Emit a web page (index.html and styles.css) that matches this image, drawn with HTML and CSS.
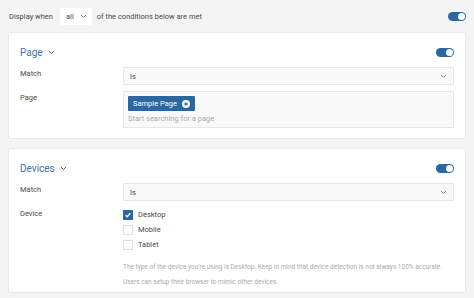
FILE: index.html
```html
<!DOCTYPE html>
<html lang="en">
<head>
    <meta charset="UTF-8">
    <meta name="viewport" content="width=device-width, initial-scale=1.0">
    <title>Display Conditions</title>
    <link rel="stylesheet" href="styles.css">
</head>
<body>

<div class="top-bar">
    <span>Display when</span>
    <div class="mini-select">
        all
        <svg class="chev" width="7" height="5" viewBox="0 0 7 5"><polyline points="1,1 3.5,3.5 6,1" fill="none" stroke="#777" stroke-width="1"/></svg>
    </div>
    <span>of the conditions below are met</span>
    <span class="toggle on top-toggle"></span>
</div>

<div class="card">
    <div class="card-head">
        <span class="card-title">Page
            <svg class="chev" width="7" height="5" viewBox="0 0 7 5"><polyline points="1,1 3.5,3.5 6,1" fill="none" stroke="#3f72a8" stroke-width="1"/></svg>
        </span>
        <span class="toggle on"></span>
    </div>
    <div class="row">
        <label>Match</label>
        <div class="select">
            <span>Is</span>
            <svg class="chev" width="7" height="5" viewBox="0 0 7 5"><polyline points="1,1 3.5,3.5 6,1" fill="none" stroke="#888" stroke-width="1"/></svg>
        </div>
    </div>
    <div class="row">
        <label>Page</label>
        <div class="tag-box">
            <span class="chip">Sample Page
                <svg width="8" height="8" viewBox="0 0 8 8"><circle cx="4" cy="4" r="4" fill="#fff"/><path d="M2.6 2.6 L5.4 5.4 M5.4 2.6 L2.6 5.4" stroke="#2b68a1" stroke-width="1.2"/></svg>
            </span>
            <div class="placeholder">Start searching for a page</div>
        </div>
    </div>
</div>

<div class="card card-last">
    <div class="card-head">
        <span class="card-title">Devices
            <svg class="chev" width="7" height="5" viewBox="0 0 7 5"><polyline points="1,1 3.5,3.5 6,1" fill="none" stroke="#3f72a8" stroke-width="1"/></svg>
        </span>
        <span class="toggle on"></span>
    </div>
    <div class="row">
        <label>Match</label>
        <div class="select">
            <span>Is</span>
            <svg class="chev" width="7" height="5" viewBox="0 0 7 5"><polyline points="1,1 3.5,3.5 6,1" fill="none" stroke="#888" stroke-width="1"/></svg>
        </div>
    </div>
    <div class="row">
        <label>Device</label>
        <div class="checks">
            <div class="check-item">
                <span class="box checked">
                    <svg width="10" height="10" viewBox="0 0 10 10"><path d="M2.6 5.2 L4.2 6.8 L7.4 3.2" fill="none" stroke="#fff" stroke-width="1.3"/></svg>
                </span>
                Desktop
            </div>
            <div class="check-item"><span class="box"></span>Mobile</div>
            <div class="check-item"><span class="box"></span>Tablet</div>
            <p class="help">The type of the device you're using is Desktop. Keep in mind that device detection is not always 100% accurate. Users can setup their browser to mimic other devices</p>
        </div>
    </div>
</div>

</body>
</html>
```

FILE: styles.css
```css
body {
    margin: 0;
    background: #f4f4f4;
    font-family: Roboto, "Liberation Sans", sans-serif;
    font-size: 7.5px;
    color: #4a4a4a;
}

.top-bar {
    display: flex;
    align-items: center;
    height: 32px;
    padding: 0 8px 0 9px;
    gap: 5px;
}

.mini-select {
    display: flex;
    align-items: center;
    gap: 6px;
    background: #fff;
    height: 17px;
    padding: 0 5px 0 6px;
    margin: 1px 0 0 2px;
}

.top-toggle {
    margin-left: auto;
}

.toggle {
    display: inline-block;
    position: relative;
    width: 18px;
    height: 9px;
    border-radius: 5px;
    background: #ccc;
}

.toggle.on {
    background: #2b68a1;
}

.toggle.on::after {
    content: "";
    position: absolute;
    right: 1px;
    top: 1px;
    width: 7px;
    height: 7px;
    border-radius: 50%;
    background: #fff;
}

.card {
    background: #fff;
    border: 1px solid #e9e9e9;
    border-radius: 2px;
    margin: 0 8px 9px 8px;
    padding: 10px 11px 10px 11px;
}

.card-last {
    padding-bottom: 2px;
}

.card-head {
    display: flex;
    justify-content: space-between;
    align-items: center;
    height: 18px;
    margin-bottom: 6px;
}

.card-title {
    display: flex;
    align-items: center;
    gap: 5px;
    font-size: 10px;
    color: #3f72a8;
}

.row {
    display: flex;
    margin-bottom: 6px;
}

.row:last-child {
    margin-bottom: 0;
}

.row label {
    width: 103px;
    flex-shrink: 0;
    padding-top: 2px;
}

.select {
    flex: 1;
    display: flex;
    justify-content: space-between;
    align-items: center;
    height: 16px;
    padding: 0 6px;
    background: #f9f9f9;
    border: 1px solid #e6e6e6;
}

.tag-box {
    flex: 1;
    padding: 4px;
    background: #f9f9f9;
    border: 1px solid #e6e6e6;
    box-sizing: border-box;
    height: 37px;
}

.chip {
    display: inline-flex;
    align-items: center;
    gap: 5px;
    height: 15px;
    padding: 0 5px;
    background: #2b68a1;
    color: #fff;
    border-radius: 1px;
}

.placeholder {
    margin-top: 3px;
    color: #aaa;
}

.checks {
    flex: 1;
}

.check-item {
    display: flex;
    align-items: center;
    gap: 5px;
    height: 15px;
}

.box {
    width: 10px;
    height: 10px;
    border: 1px solid #ddd;
    box-sizing: border-box;
    background: #fff;
    display: flex;
}

.box.checked {
    background: #2b68a1;
    border-color: #2b68a1;
}

.box.checked svg {
    margin: -1px;
}

.help {
    margin: 8px 0 0 0;
    font-size: 6.5px;
    line-height: 15px;
    color: #aaa;
}
```
